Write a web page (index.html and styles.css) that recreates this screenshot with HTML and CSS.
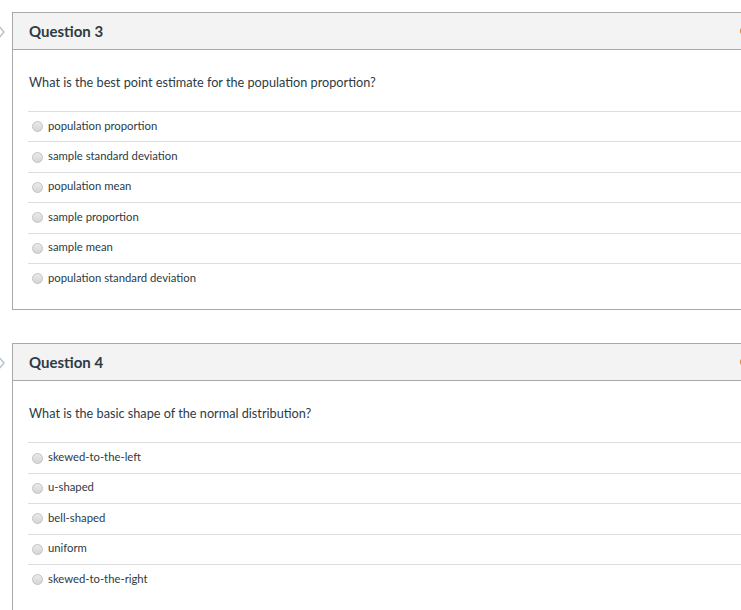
FILE: index.html
```html
<html>
<head>
<title>Quiz</title>
<meta name="viewport" content="width=device-width, initial-scale=1.0" />
<link rel="stylesheet" href="styles.css">
</head>
<body>

<div class="question">
<svg class="chev" width="8" height="16" viewBox="0 0 8 16"><path d="M0 1 L6 8 L0 15" fill="none" stroke="#b4c2cf" stroke-width="1.4"/></svg>
<span class="flag"></span>
<div class="qheader">Question 3</div>
<div class="qbody">
<div class="qtext">What is the best point estimate for the population proportion?</div>
<div class="answers">
<div class="answer"><span class="radio"></span>population proportion</div>
<div class="answer"><span class="radio"></span>sample standard deviation</div>
<div class="answer"><span class="radio"></span>population mean</div>
<div class="answer"><span class="radio"></span>sample proportion</div>
<div class="answer"><span class="radio"></span>sample mean</div>
<div class="answer"><span class="radio"></span>population standard deviation</div>
</div>
</div>
</div>

<div class="question">
<svg class="chev" width="8" height="16" viewBox="0 0 8 16"><path d="M0 1 L6 8 L0 15" fill="none" stroke="#b4c2cf" stroke-width="1.4"/></svg>
<span class="flag"></span>
<div class="qheader">Question 4</div>
<div class="qbody">
<div class="qtext">What is the basic shape of the normal distribution?</div>
<div class="answers">
<div class="answer"><span class="radio"></span>skewed-to-the-left</div>
<div class="answer"><span class="radio"></span>u-shaped</div>
<div class="answer"><span class="radio"></span>bell-shaped</div>
<div class="answer"><span class="radio"></span>uniform</div>
<div class="answer"><span class="radio"></span>skewed-to-the-right</div>
</div>
</div>
</div>

</body>
</html>
```
FILE: styles.css
```css
body{
margin:0;
padding:12px 0 0 12px;
overflow:hidden;
background-color:#FFF;
font-family:Lato,"Open Sans",sans-serif;
color:#2D3B45;
}

.question{
position:relative;
width:760px;
border:1px solid #A9A9A9;
margin-bottom:33px;
background-color:#FFF;
}

.chev{position:absolute;left:-15px;top:11px;}
.flag{position:absolute;left:727px;top:14px;width:8px;height:8px;border-radius:50%;background-color:#E08A2E;}

.qheader{
height:36px;
line-height:36px;
padding-left:16px;
background-color:#F3F3F3;
border-bottom:1px solid #A9A9A9;
font-size:15px;
font-weight:bold;
}

.qbody{padding:0 0 16px 15px;}

.qtext{
font-size:12.7px;
line-height:18px;
padding:23px 0 20px 1px;
}

.answer{
display:flex;
align-items:center;
box-sizing:border-box;
height:30.4px;
padding:0 0 3px 4px;
border-top:1px solid #DDD;
font-size:11.3px;
}

.radio{
box-sizing:border-box;
width:11px;
height:11px;
margin-top:3px;
border-radius:50%;
border:1px solid #C2C2C2;
background:linear-gradient(#EAEAEA,#D6D6D6);
margin-right:5px;
}
```
